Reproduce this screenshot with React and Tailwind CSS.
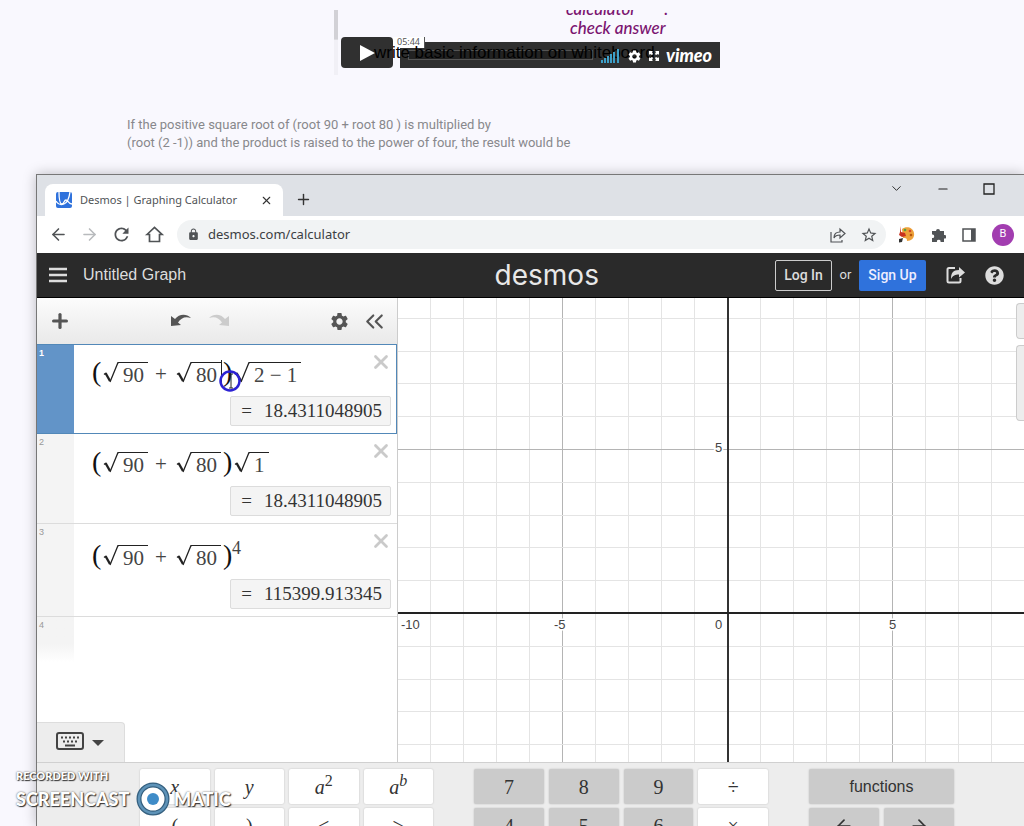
import { useState } from 'react';
import { ArrowLeft, ArrowRight, ChevronDown, ChevronsLeft, Minus, Plus, X } from 'lucide-react';
import { MdLock, MdRefresh, MdSettings, MdStarBorder } from 'react-icons/md';
import { FaQuestionCircle } from 'react-icons/fa';

const SERIF = "font-['Liberation_Serif',serif]";

function Sqrt({ children }) {
  return (
    <span className="inline-flex h-[21px] items-stretch">
      <svg className="h-[21px] w-[18px]" viewBox="0 0 18 21" fill="none" stroke="#222">
        <path d="M3 12.500 5 11" strokeWidth="1.200" />
        <path d="M4.500 11 9 19" strokeWidth="2.400" />
        <path d="M9 20 17 .5H18" strokeWidth="1.300" />
      </svg>
      <span className="border-t border-[#222] px-1 leading-[24px]">{children}</span>
    </span>
  );
}

function Paren({ children }) {
  return <span className="w-[9px] text-[28px] leading-[30px] text-[#111]">{children}</span>;
}

function RootSum({ caret }) {
  return (
    <>
      <Paren>(</Paren>
      <Sqrt>90</Sqrt>
      <span className="w-[26px] pt-1 text-center leading-6">+</span>
      <Sqrt>80</Sqrt>
      {caret ? <span className="mr-px h-6 w-px bg-[#222]" /> : <span className="w-0.5" />}
      <Paren>)</Paren>
    </>
  );
}

const expressions = [
  { id: 1, caret: true, pad: 'pt-3', result: '18.4311048905', tail: <Sqrt>2 − 1</Sqrt> },
  { id: 2, pad: 'pt-[13px]', result: '18.4311048905', tail: <Sqrt>1</Sqrt> },
  { id: 3, pad: 'pt-4', result: '115399.913345', tail: <sup className="top-0 self-start text-[18px] leading-4">4</sup> },
];

function ExpressionRow({ item, active, onSelect }) {
  return (
    <li
      onClick={onSelect}
      className={active ? 'flex min-h-[90px] border-y border-r border-[#5288b8]' : 'flex min-h-[90px] border-b border-[#dcdcdc]'}
    >
      <span
        className={
          active
            ? "w-[37px] shrink-0 bg-[#6294c8] pt-0.5 pl-0.5 font-['Liberation_Sans',sans-serif] text-[9px] leading-3 font-bold text-white"
            : "w-[37px] shrink-0 bg-[#f4f4f4] pt-0.5 pl-0.5 font-['Liberation_Sans',sans-serif] text-[9px] leading-3 text-[#999]"
        }
      >
        {item.id}
      </span>
      <div className={active ? 'flex grow flex-col pr-[5px]' : 'flex grow flex-col pr-1.5'}>
        <div className="flex items-start justify-between">
          <div className={`${SERIF} flex items-center text-[21px] text-[#444] ${item.pad} pl-[18px]`}>
            <RootSum caret={item.caret} />
            {item.tail}
          </div>
          <button type="button" aria-label="Delete expression" className="mt-1.5 -mr-px text-[#cacaca]">
            <X size={22} strokeWidth={3} />
          </button>
        </div>
        <output className={`${SERIF} mt-[9px] mb-[7px] flex h-[30px] items-center gap-3 self-end rounded-xs border border-[#dcdcdc] bg-[#f4f4f4] pr-2 pl-2.5 text-[19px] text-[#333]`}>
          <span>=</span>
          <span>{item.result}</span>
        </output>
      </div>
    </li>
  );
}

function Graph() {
  const x0 = 329;
  const y0 = 315;
  const cols = Array.from({ length: 20 }, (_, i) => i - 10).filter((n) => n !== 0);
  const rows = Array.from({ length: 14 }, (_, i) => i - 4).filter((n) => n !== 0);
  return (
    <svg className="absolute inset-0 h-full w-full font-['Liberation_Sans',sans-serif] text-[13px]" shapeRendering="crispEdges">
      {cols.map((n) => (
        <line key={n} x1={x0 + n * 33 + 0.5} x2={x0 + n * 33 + 0.5} y1="0" y2="100%" stroke={n % 5 === 0 ? '#b4b4b4' : '#e4e4e4'} />
      ))}
      {rows.map((n) => (
        <line key={n} y1={y0 - n * 32.8 + 0.5} y2={y0 - n * 32.8 + 0.5} x1="0" x2="100%" stroke={n % 5 === 0 ? '#b4b4b4' : '#e4e4e4'} />
      ))}
      <line x1={x0 + 0.5} x2={x0 + 0.5} y1="0" y2="100%" stroke="#333" strokeWidth="2" />
      <line y1={y0} y2={y0} x1="0" x2="100%" stroke="#222" strokeWidth="2" />
      <g fill="#444" stroke="#fff" strokeWidth="3" paintOrder="stroke" shapeRendering="auto">
        <text x="3" y="331">-10</text>
        <text x="156" y="331">-5</text>
        <text x="317" y="331">0</text>
        <text x="491" y="331">5</text>
        <text x="317" y="154">5</text>
      </g>
    </svg>
  );
}

function Key({ children, dark, wide, label }) {
  return (
    <button
      type="button"
      aria-label={label}
      className={`flex h-[35px] items-center justify-center rounded-xs shadow-[0_0_2px_rgba(0,0,0,0.2)] ${dark ? 'bg-[#cbcbcb]' : 'bg-white'} ${wide ? 'col-span-2' : ''} text-[#333]`}
    >
      {children}
    </button>
  );
}

function Keypad() {
  return (
    <div className={`${SERIF} relative flex h-16 shrink-0 gap-[41px] overflow-hidden border-t border-[#d0d0d0] bg-[#ededed] pt-1.5 pl-[103px] text-[20px]`}>
      <div className="grid w-[293px] shrink-0 grid-cols-4 content-start gap-x-[5px] gap-y-1">
        <Key><i>x</i></Key>
        <Key><i>y</i></Key>
        <Key><span><i>a</i><sup className="text-[16px]">2</sup></span></Key>
        <Key><span><i>a</i><sup className="text-[16px]"><i>b</i></sup></span></Key>
        <Key>(</Key>
        <Key>)</Key>
        <Key>&lt;</Key>
        <Key>&gt;</Key>
      </div>
      <div className="grid w-[294px] shrink-0 grid-cols-4 content-start gap-x-[5px] gap-y-1">
        <Key dark>7</Key>
        <Key dark>8</Key>
        <Key dark>9</Key>
        <Key>÷</Key>
        <Key dark>4</Key>
        <Key dark>5</Key>
        <Key dark>6</Key>
        <Key>×</Key>
      </div>
      <div className="grid w-[145px] shrink-0 grid-cols-2 content-start gap-x-[5px] gap-y-1">
        <Key dark wide><span className="font-['Liberation_Sans',sans-serif] text-base">functions</span></Key>
        <Key dark label="Left"><ArrowLeft size={20} /></Key>
        <Key dark label="Right"><ArrowRight size={20} /></Key>
      </div>
    </div>
  );
}

function VideoPlayer() {
  return (
    <div className="flex gap-[3px] pt-2.5 pl-[334px]">
      <div className="h-[65px] w-1 bg-linear-to-b from-[#d2d1d6] from-45% to-[#f1f0f6] to-46%" />
      <div>
        <div className="flex h-[27px] flex-col justify-end overflow-hidden pl-[225px] font-['Lato',sans-serif] text-[17px] leading-[19px] font-medium text-[#7b1470] italic">
          <p>calculator<span className="pl-7">.</span></p>
          <p className="pl-1">check answer</p>
        </div>
        <div className="relative flex items-end gap-[7px]">
          <button type="button" aria-label="Play" className="flex h-[31px] w-[52px] items-center justify-center rounded-sm bg-[#303030]">
            <svg className="h-4 w-4" viewBox="0 0 16 16"><path d="M1 0 16 8 1 16Z" fill="#fff" /></svg>
          </button>
          <div className="flex h-[26px] w-80 items-center bg-[#303030] pr-2 pl-2">
            <div className="h-2.5 w-[186px] border border-[#555] bg-[#222]" />
            <div className="relative z-10 flex items-center pt-0.5">
              <svg className="ml-2 h-3.5 w-5" viewBox="0 0 20 14" fill="#3d9fc8">
                <path d="M0 11h2v3H0zM3 9h2v5H3zM6 7h2v7H6zM9 5h2v9H9zM12 3h2v11h-2zM16 0h2v14h-2z" />
              </svg>
              <MdSettings className="ml-1.5 text-white" size={15} />
              <svg className="ml-1.5 h-3 w-3" viewBox="0 0 12 12" fill="#fff">
                <path d="M1 1h4L4 2l1 2-1 1-2-1-1 1zM11 1v4l-1-1-2 1-1-1 1-2-1-1zM1 11V7l1 1 2-1 1 1-1 2 1 1zM11 11H7l1-1-1-2 1-1 2 1 1-1z" />
              </svg>
            </div>
            <span className="ml-1.5 font-['Lato',sans-serif] text-[18px] leading-5 font-black text-white italic">vimeo</span>
          </div>
          <span className="absolute top-0 left-[52px] h-[11px] w-8 border-r border-[#555] bg-white pl-1 font-['Noto_Sans',sans-serif] text-[9px] leading-[10px] text-[#555]">05:44</span>
          <span className="absolute top-1.5 left-[33px] font-['Liberation_Sans',sans-serif] text-[17px] leading-5 whitespace-nowrap text-black">
            write basic information on whiteboard
          </span>
        </div>
      </div>
    </div>
  );
}

function BrowserChrome() {
  return (
    <>
      <div className="flex h-[41px] shrink-0 items-end bg-[#dee1e6] pl-2">
        <div className="flex h-8 w-[238px] items-center rounded-t-lg bg-white pr-2.5 pl-[11px]">
          <svg className="h-4 w-4" viewBox="0 0 16 16">
            <rect width="16" height="16" rx="2" fill="#2f72dc" />
            <path d="M3 0C3 6 4 12 6 12s2-4 4-4 2 4 6 4M0 9c2 4 5 4 8 3s5-5 6-12" fill="none" stroke="#fff" strokeWidth="1.300" />
          </svg>
          <span className="grow pl-2 font-['Noto_Sans',sans-serif] text-[11px] whitespace-nowrap text-[#505356]">Desmos | Graphing Calculator</span>
          <button type="button" aria-label="Close tab" className="text-[#333]"><X size={13} /></button>
        </div>
        <button type="button" aria-label="New tab" className="mb-2 ml-3 text-[#333]"><Plus size={17} /></button>
        <div className="mb-5 ml-auto flex items-center gap-8 pr-7 text-[#222]">
          <button type="button" aria-label="Search tabs"><ChevronDown size={15} strokeWidth={1.5} /></button>
          <button type="button" aria-label="Minimize"><Minus size={14} strokeWidth={2} /></button>
          <button type="button" aria-label="Maximize">
            <svg className="h-3 w-3.5" viewBox="0 0 14 12"><path d="M2 1h10v10H2z" fill="none" stroke="currentColor" strokeWidth="1.300" /></svg>
          </button>
        </div>
      </div>
      <div className="flex h-[37px] shrink-0 items-center bg-white pr-2.5 pl-3 text-[#505356]">
        <div className="flex items-center gap-3">
          <button type="button" aria-label="Back"><ArrowLeft size={19} /></button>
          <button type="button" aria-label="Forward" className="text-[#b8babd]"><ArrowRight size={19} /></button>
          <button type="button" aria-label="Reload"><MdRefresh size={21} /></button>
          <button type="button" aria-label="Home">
            <svg className="h-[21px] w-[21px]" viewBox="0 0 21 21"><path d="M3 10.500 10.500 3.500l7.500 7H15.500V17.500h-10v-7Z" fill="none" stroke="currentColor" strokeWidth="1.700" /></svg>
          </button>
        </div>
        <div className="ml-3 flex h-[29px] grow items-center rounded-full bg-[#f1f3f4] pr-2 pl-2.5">
          <MdLock size={13} />
          <input
            aria-label="Address"
            defaultValue="desmos.com/calculator"
            className="ml-2 min-w-0 grow bg-transparent font-['Noto_Sans',sans-serif] text-[13px] text-[#3c4043] outline-none"
          />
          <button type="button" aria-label="Share page">
            <svg className="h-4 w-4" viewBox="0 0 16 16" fill="none" stroke="currentColor" strokeWidth="1.200">
              <path d="M1 5v10h11v-2M4 11c0-4 2-6 6-6V2l5 4.500-5 4.500V8c-3 0-5 1-6 3Z" />
            </svg>
          </button>
          <button type="button" aria-label="Bookmark" className="ml-3.5"><MdStarBorder size={18} /></button>
        </div>
        <div className="ml-3 flex items-center gap-4">
          <svg className="h-[17px] w-[17px]" viewBox="0 0 17 17">
            <path d="M4 3C8 0 15 1 16 7c1 5-3 8-7 8 0-3-1-3-4-3Z" fill="#eda13b" />
            <path d="M2 0l1 6 4 1 1 3-4 1-3-2 1-3Z" fill="#c8321f" />
            <path d="M1 13l4-1-1 4-3 .500Z" fill="#333" />
            <circle cx="7" cy="4" r="1.300" fill="#56a33a" />
            <circle cx="12" cy="5" r="1.300" fill="#d2452b" />
            <circle cx="13" cy="9" r="1.300" fill="#b8560c" />
          </svg>
          <svg className="h-[15px] w-[15px]" viewBox="0 0 15 15" fill="currentColor">
            <path d="M1 4h4a2 2 0 1 1 4 0h4v4a1.800 1.800 0 1 1 0 3.500V15H9.500a1.800 1.800 0 1 0-3.500 0H1v-4a1.800 1.800 0 1 0 0-3.500Z" />
          </svg>
          <svg className="h-3.5 w-3.5" viewBox="0 0 14 14"><path d="M1 1h12v12H1z" fill="none" stroke="currentColor" strokeWidth="1.500" /><path d="M9 1h4v12H9z" fill="currentColor" /></svg>
          <span className="flex h-[22px] w-[22px] items-center justify-center rounded-full bg-[#a23db0] font-['Roboto',sans-serif] text-[11px] text-white">B</span>
        </div>
      </div>
    </>
  );
}

function DesmosHeader() {
  return (
    <header className="grid h-[45px] shrink-0 grid-cols-[11fr_auto_10fr] items-center border-b border-black bg-[#2a2a2a] pr-5 pl-3 font-['Liberation_Sans',sans-serif] text-[#ddd]">
      <div className="flex items-center gap-4">
        <button type="button" aria-label="Menu">
          <svg className="h-4 w-[18px]" viewBox="0 0 18 16"><path d="M0 2h18M0 8h18M0 14h18" stroke="#ddd" strokeWidth="2.400" /></svg>
        </button>
        <span className="text-base">Untitled Graph</span>
      </div>
      <span className="font-['Inter',sans-serif] text-[28px] leading-9 text-[#e8e8e8]">desmos</span>
      <div className="flex items-center justify-end font-['Roboto',sans-serif] text-sm">
        <button type="button" className="h-[31px] w-[57px] rounded-xs border border-[#ccc] font-medium whitespace-nowrap">Log In</button>
        <span className="w-[27px] text-center text-[13px]">or</span>
        <button type="button" className="h-[31px] w-[67px] rounded-xs bg-[#2f72dc] font-medium whitespace-nowrap text-[#eef]">Sign Up</button>
        <button type="button" aria-label="Share graph" className="ml-5">
          <svg className="h-[18px] w-[19px]" viewBox="0 0 19 18">
            <path d="M9 2H3Q1.500 2 1.500 3.500V15Q1.500 16.500 3 16.500H13Q14.500 16.500 14.500 15V12" fill="none" stroke="#ddd" strokeWidth="2" />
            <path d="M5 13c0-6 2-9 8-9V1l6 5.500-6 5V8.500c-4 0-6 1-8 4.500Z" fill="#ddd" />
          </svg>
        </button>
        <button type="button" aria-label="Help" className="ml-5"><FaQuestionCircle size={19} /></button>
      </div>
    </header>
  );
}

function ExpressionPanel() {
  const [active, setActive] = useState(1);
  return (
    <section className="relative flex w-[361px] shrink-0 flex-col border-r border-[#ccc] bg-white">
      <div className="flex h-[46px] shrink-0 items-center bg-linear-to-b from-[#fcfcfc] to-[#e9e9e9] pr-2 pl-3 text-[#555]">
        <button type="button" aria-label="Add item"><Plus size={22} strokeWidth={3.5} /></button>
        <div className="ml-[100px] flex items-center gap-[18px]">
          <button type="button" aria-label="Undo">
            <svg className="h-4 w-5" viewBox="0 0 20 16"><path d="M0 3v10l10-1-3-2.500C10 5 14 3 20 5 15 0 8 1 4 6Z" fill="#555" /></svg>
          </button>
          <button type="button" aria-label="Redo">
            <svg className="h-4 w-5" viewBox="0 0 20 16"><path d="M20 3v10l-10-1 3-2.500C10 5 6 3 0 5 5 0 12 1 16 6Z" fill="#ccc" /></svg>
          </button>
        </div>
        <button type="button" aria-label="Edit list" className="ml-auto"><MdSettings size={21} /></button>
        <button type="button" aria-label="Hide list" className="ml-2.5"><ChevronsLeft size={29} strokeWidth={1.75} /></button>
      </div>
      <ul>
        {expressions.map((item) => (
          <ExpressionRow key={item.id} item={item} active={item.id === active} onSelect={() => setActive(item.id)} />
        ))}
        <li className="h-[45px] w-[37px] bg-linear-to-b from-[#f4f4f4] from-60% to-white pt-0.5 pl-0.5 font-['Liberation_Sans',sans-serif] text-[9px] leading-3 text-[#999]">4</li>
      </ul>
      <button
        type="button"
        aria-label="Toggle keypad"
        className="absolute bottom-0 left-0 flex h-10 w-[88px] items-center gap-2 rounded-tr-sm border-t border-r border-[#ddd] bg-[#ededed] pb-1 pl-[19px]"
      >
        <svg className="h-[18px] w-7" viewBox="0 0 28 18" stroke="#444" fill="none">
          <rect x="1" y="1" width="26" height="16" rx="2" strokeWidth="2" />
          <path d="M5 5.500h19M7 9.500h15" strokeWidth="2" strokeDasharray="2 2" />
          <path d="M9 13.500h10" strokeWidth="2" />
        </svg>
        <svg className="mt-1 h-1.5 w-3" viewBox="0 0 12 6"><path d="M0 0h12L6 6Z" fill="#444" /></svg>
      </button>
      {/* click highlight with the text pointer inside */}
      <svg className="absolute top-[72px] left-[182px] h-[22px] w-[22px]" viewBox="0 0 22 22" fill="none">
        <circle cx="11" cy="11" r="9.500" stroke="#2c22d4" strokeWidth="2.500" />
        <path d="M10 4h4M12 4v14M10 18h4" stroke="#222" />
      </svg>
    </section>
  );
}

function Watermark() {
  return (
    <div className="absolute bottom-2.5 left-4 font-['Lato',sans-serif] font-black text-white [text-shadow:1px_1px_1px_#333,0_0_2px_#555]">
      <p className="text-[11px] leading-3">RECORDED WITH</p>
      <div className="flex items-center text-[18px] leading-[34px]">
        <span className="w-[120px]">SCREENCAST</span>
        <svg className="h-[34px] w-[34px]" viewBox="0 0 34 34">
          <circle cx="17" cy="17" r="14" fill="#fff" stroke="#35607f" strokeWidth="5" />
          <circle cx="17" cy="17" r="14" fill="none" stroke="#5e93b8" strokeWidth="2.500" />
          <circle cx="17" cy="17" r="6" fill="#3f8cc8" />
        </svg>
        <span className="pl-1">MATIC</span>
      </div>
    </div>
  );
}

export default function App() {
  return (
    <div className="relative flex h-screen flex-col overflow-hidden bg-[#f9f8fe]">
      <VideoPlayer />
      <p className="pt-[41px] pb-[22px] pl-[127px] font-['Roboto',sans-serif] text-[13px] leading-[18px] text-[#88888c]">
        If the positive square root of (root 90 + root 80 ) is multiplied by
        <br />
        (root (2 -1)) and the product is raised to the power of four, the result would be
      </p>
      <main className="ml-9 flex min-h-0 grow flex-col border-t border-l border-[#777] shadow-[0_0_12px_rgba(0,0,0,0.25)]">
        <BrowserChrome />
        <DesmosHeader />
        <div className="flex min-h-0 grow">
          <ExpressionPanel />
          <section className="relative grow overflow-hidden bg-white">
            <Graph />
            <div className="absolute top-[5px] right-0 flex w-2 flex-col gap-1.5">
              <span className="h-9 rounded-l-sm border border-r-0 border-[#ccc] bg-[#ededed]" />
              <span className="h-[76px] rounded-l-sm border border-r-0 border-[#ccc] bg-[#ededed]" />
            </div>
          </section>
        </div>
        <Keypad />
      </main>
      <Watermark />
    </div>
  );
}
